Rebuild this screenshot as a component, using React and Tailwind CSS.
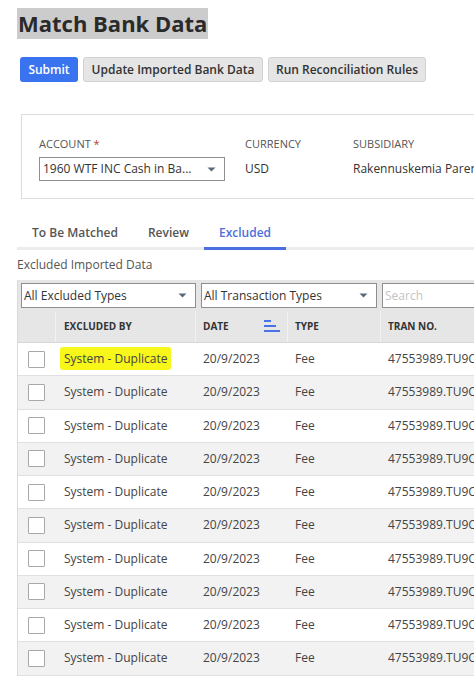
import React from "react";

const Caret = () => (
  <svg width="9" height="5" viewBox="0 0 9 5" className="shrink-0">
    <path d="M0.5 0.5 L4.5 4.5 L8.5 0.5 Z" fill="#5a6a7e" />
  </svg>
);

const SortIcon = () => (
  <svg width="16" height="13" viewBox="0 0 16 13">
    <rect x="0" y="0" width="7" height="2" fill="#4a72e8" />
    <rect x="0" y="5" width="12" height="2" fill="#4a72e8" />
    <rect x="0" y="10" width="16" height="2" fill="#4a72e8" />
  </svg>
);

const rows = Array.from({ length: 10 });

export default function App() {
  return (
    <div
      className="w-[474px] h-[679px] overflow-hidden bg-white text-[#333]"
      style={{ fontFamily: '"Open Sans", "Noto Sans", sans-serif' }}
    >
      <div className="pt-[8px] pl-[17px]">
        <h1 className="inline-block bg-[#cccccc] h-[31px] leading-[31px] text-[22px] font-bold text-[#2a2a2a] px-[1px]">
          Match Bank Data
        </h1>
      </div>

      <div className="flex gap-[5px] pl-[20px] mt-[18px]">
        <button className="w-[58px] h-[25px] flex items-center justify-center rounded-[3px] bg-[#3a73f0] text-white text-[12px] font-semibold">
          Submit
        </button>
        <button className="w-[180px] h-[25px] flex items-center justify-center rounded-[3px] bg-[#e5e5e5] border border-[#d2d2d2] text-[12px] font-semibold text-[#333]">
          Update Imported Bank Data
        </button>
        <button className="w-[158px] h-[25px] flex items-center justify-center rounded-[3px] bg-[#e5e5e5] border border-[#d2d2d2] text-[12px] font-semibold text-[#333]">
          Run Reconciliation Rules
        </button>
      </div>

      <div className="ml-[21px] mt-[32px] w-[560px] h-[85px] border border-[#dcdcdc] flex pl-[17px] pt-[21px]">
        <div className="w-[206px]">
          <div className="text-[11px] leading-[16px] text-[#555] uppercase">
            Account <span className="text-[#b5442c]">*</span>
          </div>
          <div className="mt-[5px] w-[186px] h-[24px] border border-[#8f8f8f] flex items-center justify-between pl-[3px] pr-[8px] text-[12px] text-[#333]">
            <span>1960 WTF INC Cash in Ba...</span>
            <Caret />
          </div>
        </div>
        <div className="w-[108px]">
          <div className="text-[11px] leading-[16px] text-[#555] uppercase">Currency</div>
          <div className="mt-[5px] h-[24px] leading-[24px] text-[12px] text-[#333]">USD</div>
        </div>
        <div>
          <div className="text-[11px] leading-[16px] text-[#555] uppercase">Subsidiary</div>
          <div className="mt-[5px] h-[24px] leading-[24px] text-[12px] text-[#333] whitespace-nowrap">
            Rakennuskemia Parent Company
          </div>
        </div>
      </div>

      <div className="ml-[17px] mt-[18px] w-[560px] flex border-b-[3px] border-[#ececec] h-[33px]">
        <div className="px-[15px] text-[12px] font-semibold text-[#555] leading-[31px]">To Be Matched</div>
        <div className="px-[15px] text-[12px] font-semibold text-[#555] leading-[31px]">Review</div>
        <div className="px-[15px] text-[12px] font-semibold text-[#4d6fdc] leading-[31px] h-[33px] border-b-[3px] border-[#4a6fe0]">
          Excluded
        </div>
      </div>

      <div className="ml-[17px] mt-[6px] text-[12px] leading-[18px] text-[#555]">Excluded Imported Data</div>

      <div className="ml-[17px] mt-[6px] w-[560px] border-l border-[#dadada]">
        <div className="h-[31px] bg-[#e6e6e6] flex items-center gap-[5px] pl-[3px]">
          <div className="w-[175px] h-[25px] bg-white border border-[#8f8f8f] flex items-center justify-between pl-[2px] pr-[8px] text-[12px] text-[#333]">
            <span>All Excluded Types</span>
            <Caret />
          </div>
          <div className="w-[176px] h-[25px] bg-white border border-[#8f8f8f] flex items-center justify-between pl-[2px] pr-[8px] text-[12px] text-[#333]">
            <span>All Transaction Types</span>
            <Caret />
          </div>
          <div className="w-[150px] h-[25px] bg-white border border-[#8f8f8f] flex items-center pl-[2px] text-[12px] text-[#c4c4c4]">
            Search
          </div>
        </div>

        <div className="h-[32px] bg-[#e6e6e6] flex text-[10px] font-bold text-[#333] uppercase border-b border-[#d8d8d8]">
          <div className="w-[37px]" />
          <div className="w-[140px] border-l border-[#f2f2f2] pl-[8px] flex items-center">Excluded By</div>
          <div className="w-[92px] border-l border-[#f2f2f2] pl-[7px] pr-[7px] flex items-center justify-between">
            <span>Date</span>
            <SortIcon />
          </div>
          <div className="w-[93px] border-l border-[#f2f2f2] pl-[7px] flex items-center">Type</div>
          <div className="w-[180px] border-l border-[#f2f2f2] pl-[7px] flex items-center">Tran No.</div>
        </div>

        {rows.map((_, i) => (
          <div
            key={i}
            className={`h-[33.25px] flex items-center text-[12px] text-[#444] border-b border-[#e0e0e0] ${
              i % 2 === 1 ? "bg-[#f2f2f2]" : "bg-white"
            }`}
          >
            <div className="w-[37px] flex justify-center">
              <div className="w-[17px] h-[17px] border border-[#a8a8a8] bg-white rounded-[1px]" />
            </div>
            <div className="w-[140px] pl-[5px]">
              <span
                className={`px-[4px] py-[3px] ${i === 0 ? "bg-[#f7f71a] rounded-[3px]" : ""}`}
              >
                System - Duplicate
              </span>
            </div>
            <div className="w-[92px] pl-[8px]">20/9/2023</div>
            <div className="w-[93px] pl-[8px]">Fee</div>
            <div className="w-[180px] pl-[8px] whitespace-nowrap">47553989.TU9CX</div>
          </div>
        ))}
      </div>
    </div>
  );
}
